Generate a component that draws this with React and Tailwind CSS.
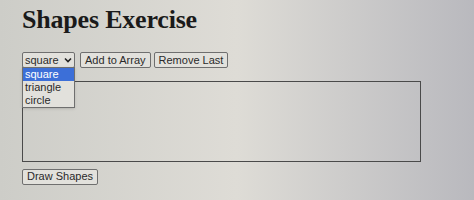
import React from "react";

function Btn({ children, className = "" }) {
	return (
		<button
			className={`h-[16px] px-[4px] border border-[#6f6f6f] rounded-[2px] bg-[#e2e1dc] text-[11px] leading-none text-[#2a2a2a] ${className}`}
			style={{ fontFamily: '"Liberation Sans", Arial, sans-serif' }}
		>
			{children}
		</button>
	);
}

export default function App() {
	const opciones = ["square", "triangle", "circle"];

	return (
		<div className="w-[474px] h-[200px] overflow-hidden bg-gradient-to-r from-[#cdcdc8] via-[#dedcd6] to-[#b9b9be]">
			<div className="pl-[22px] pt-[6px]">
				<h1
					className="text-[26px] font-bold leading-[28px] tracking-[-0.2px] text-[#1a1a1a]"
					style={{ fontFamily: '"Liberation Serif", "Times New Roman", serif' }}
				>
					Shapes Exercise
				</h1>

				<div className="relative mt-[18px] flex items-center gap-[3px]">
					<div
						className="h-[16px] w-[53px] flex items-center justify-between px-[2px] border border-[#6f6f6f] rounded-[2px] bg-[#e2e1dc] text-[11px] text-[#2a2a2a]"
						style={{ fontFamily: '"Liberation Sans", Arial, sans-serif' }}
					>
						<span>square</span>
						<svg width="8" height="6" viewBox="0 0 8 6">
							<path d="M1 1.5 L4 4.5 L7 1.5" stroke="#222" strokeWidth="1.6" fill="none" />
						</svg>
					</div>
					<Btn className="ml-[2px]">Add to Array</Btn>
					<Btn>Remove Last</Btn>

					{/* lista desplegada del select */}
					<div
						className="absolute left-0 top-[15px] z-10 w-[53px] border border-[#6f6f6f] bg-[#e2e1dc] text-[11px] leading-[13px] text-[#2a2a2a] shadow-sm"
						style={{ fontFamily: '"Liberation Sans", Arial, sans-serif' }}
					>
						{opciones.map((o, i) => (
							<div
								key={o}
								className={i === 0 ? "px-[2px] bg-[#3c6fd8] text-white" : "px-[2px]"}
							>
								{o}
							</div>
						))}
					</div>
				</div>

				<div className="mt-[13px] w-[399px] h-[81px] border-[1.5px] border-[#4a4a4a]"></div>

				<Btn className="mt-[5px]">Draw Shapes</Btn>
			</div>
		</div>
	);
}
